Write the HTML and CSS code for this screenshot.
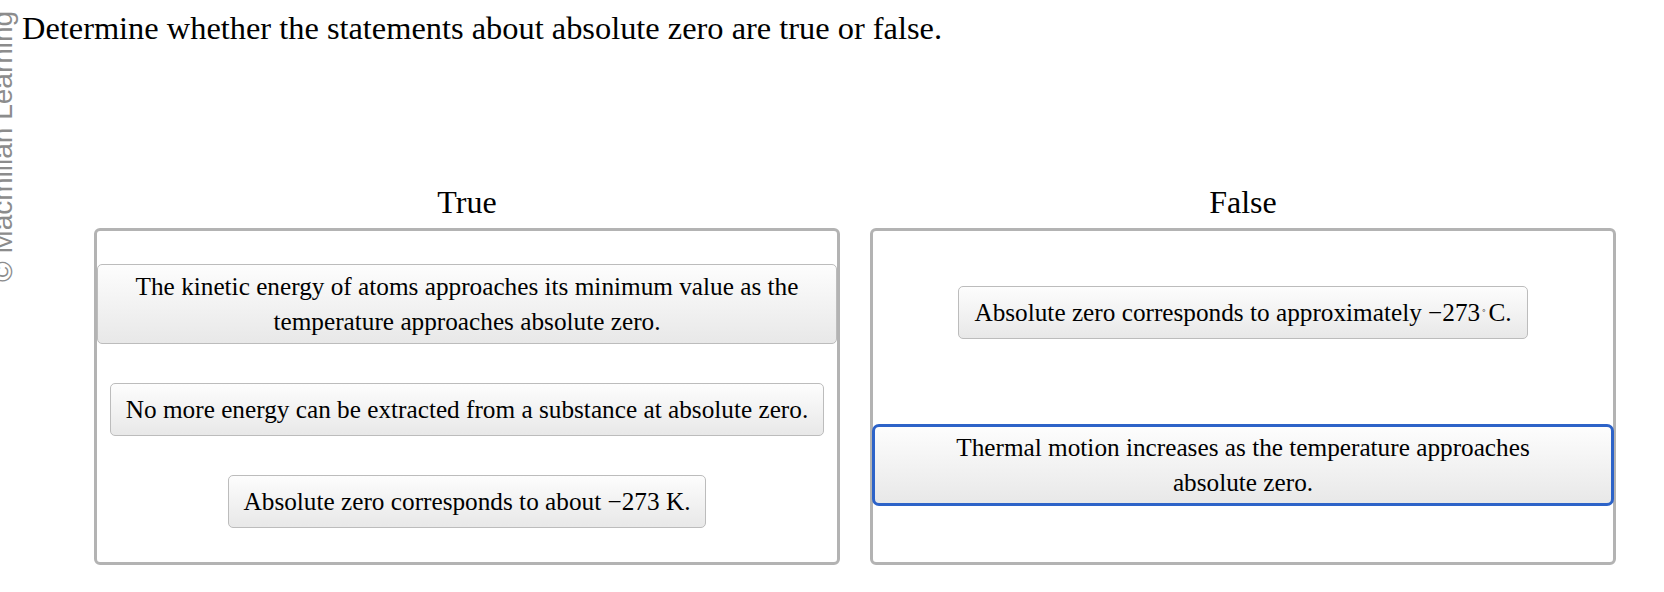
FILE: index.html
```html
<!DOCTYPE html>
<html lang="en">
<head>
    <meta charset="UTF-8">
    <meta name="viewport" content="width=device-width, initial-scale=1.0">
    <title>Absolute Zero</title>
    <link rel="stylesheet" href="styles.css">
</head>
<body>
    <div class="watermark">© Macmillan Learning</div>

    <div class="question">
        <p class="prompt">Determine whether the statements about absolute zero are true or false.</p>

        <div class="bins">
            <div class="bin">
                <div class="bin-label">True</div>
                <div class="bin-box bin-true">
                    <div class="card">The kinetic energy of atoms approaches its minimum value as the temperature approaches absolute zero.</div>
                    <div class="card">No more energy can be extracted from a substance at absolute zero.</div>
                    <div class="card">Absolute zero corresponds to about −273 K.</div>
                </div>
            </div>

            <div class="bin">
                <div class="bin-label">False</div>
                <div class="bin-box bin-false">
                    <div class="card">Absolute zero corresponds to approximately −273 <span class="deg">°</span>C.</div>
                    <div class="card selected">Thermal motion increases as the temperature approaches<br>absolute zero.</div>
                </div>
            </div>
        </div>
    </div>
</body>
</html>
```

FILE: styles.css
```css
body {
    margin: 0;
    font-family: "Liberation Serif", "Times New Roman", serif;
    color: #000;
    background-color: #fff;
}

.watermark {
    position: absolute;
    left: -11px;
    top: 282px;
    transform-origin: 0 0;
    transform: rotate(-90deg);
    font-family: "Liberation Sans", Arial, sans-serif;
    font-size: 28px;
    line-height: 28px;
    color: #8c8c8c;
    white-space: nowrap;
}

.prompt {
    margin: 0;
    padding: 10px 0 0 22px;
    font-size: 32.4px;
    line-height: 36px;
}

.bins {
    display: grid;
    grid-template-columns: 746px 746px;
    column-gap: 30px;
    padding-left: 94px;
    margin-top: 138px;
}

.bin-label {
    text-align: center;
    font-size: 32px;
    line-height: 1.15;
    margin-bottom: 7px;
}

.bin-box {
    box-sizing: border-box;
    height: 337px;
    border: 3px solid #b3b3b3;
    border-radius: 6px;
    display: flex;
    flex-direction: column;
    align-items: center;
    justify-content: center;
}

.bin-true {
    gap: 39px;
}

.bin-false {
    gap: 85px;
}

.card {
    box-sizing: border-box;
    max-width: 100%;
    min-height: 53px;
    padding: 4px 15px;
    border: 1px solid #bcbcbc;
    border-radius: 5px;
    background: linear-gradient(#fdfdfd, #e8e8e8);
    font-size: 25.25px;
    line-height: 35px;
    text-align: center;
    display: flex;
    align-items: center;
    justify-content: center;
}

.card.selected {
    width: calc(100% + 2px);
    max-width: none;
    margin: 0 -1px;
    padding: 3px 15px;
    border: 3px solid #2d63c8;
    border-radius: 7px;
}

.deg {
    font-size: 8px;
    vertical-align: 11px;
    margin: 0 3px 0 2px;
}
```
